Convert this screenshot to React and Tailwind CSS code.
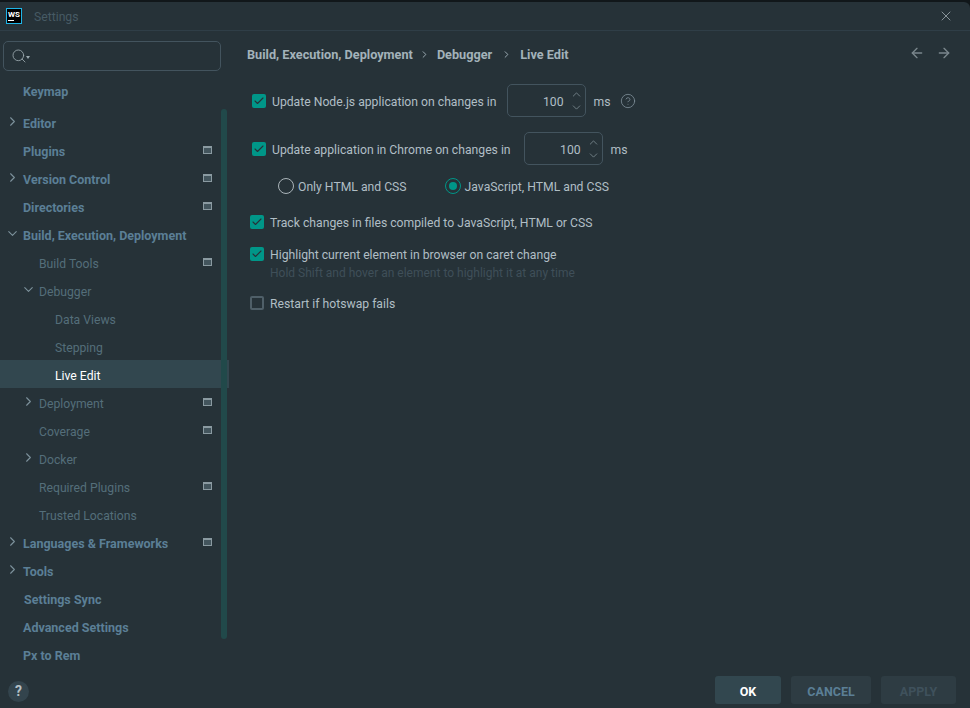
import React from "react";
import { ArrowLeft, ArrowRight, Check, ChevronDown, ChevronRight, ChevronUp, CircleHelp, Search, X } from "lucide-react";

const navItems = [
  { label: "Keymap", bold: true, indent: 23, after: 4 },
  { label: "Editor", bold: true, indent: 23, arrow: true },
  { label: "Plugins", bold: true, indent: 23, badge: true },
  { label: "Version Control", bold: true, indent: 23, arrow: true, badge: true },
  { label: "Directories", bold: true, indent: 23, badge: true },
  { label: "Build, Execution, Deployment", bold: true, indent: 23, arrow: "open" },
  { label: "Build Tools", indent: 39, badge: true },
  { label: "Debugger", indent: 39, arrow: "open" },
  { label: "Data Views", indent: 55 },
  { label: "Stepping", indent: 55 },
  { label: "Live Edit", indent: 55, active: true },
  { label: "Deployment", indent: 39, arrow: true, badge: true },
  { label: "Coverage", indent: 39, badge: true },
  { label: "Docker", indent: 39, arrow: true },
  { label: "Required Plugins", indent: 39, badge: true },
  { label: "Trusted Locations", indent: 39 },
  { label: "Languages & Frameworks", bold: true, indent: 23, arrow: true, badge: true },
  { label: "Tools", bold: true, indent: 23, arrow: true },
  { label: "Settings Sync", bold: true, indent: 24 },
  { label: "Advanced Settings", bold: true, indent: 23 },
  { label: "Px to Rem", bold: true, indent: 23 },
];

function NavRow({ item }) {
  return (
    <div
      className={`relative flex h-7 shrink-0 items-center pr-[17px] pt-1 ${item.active ? "bg-[#32474f] text-white" : item.bold ? "text-[12.5px] font-bold text-[#5b7f96]" : "text-[#546e7a]"} ${item.after ? "mb-1" : ""}`}
      style={{ paddingLeft: item.indent }}
    >
      {item.arrow && (
        <span className="absolute top-1.5" style={{ left: item.indent - 18 }}>
          {item.arrow === "open" ? (
            <ChevronDown size={15} strokeWidth={1.7} className="text-[#7d929c]" />
          ) : (
            <ChevronRight size={15} strokeWidth={1.7} className="text-[#7d929c]" />
          )}
        </span>
      )}
      <span className="flex-1 whitespace-nowrap">{item.label}</span>
      {item.badge && (
        <svg width="9" height="8" viewBox="0 0 9 8" className="mb-1">
          <path d="M0 0h9v8H0z" fill="#8a9aa1" />
          <path d="M1 2h7v5H1z" fill="#43555d" />
        </svg>
      )}
    </div>
  );
}

function CheckBox({ checked }) {
  return checked ? (
    <span className="flex h-3.5 w-3.5 shrink-0 items-center justify-center rounded-[2px] bg-[#009688]">
      <Check size={12} strokeWidth={2.2} className="text-[#263238]" />
    </span>
  ) : (
    <span className="h-3.5 w-3.5 shrink-0 rounded-[2px] border-2 border-[#4f5f68]" />
  );
}

function Label({ className = "ml-1.5", children }) {
  return <span className={`whitespace-nowrap pt-[3px] ${className}`}>{children}</span>;
}

function Spinner({ className }) {
  return (
    <div className={`flex h-[33px] w-[79px] items-center justify-end rounded-[5px] border border-[#43545e] pr-[2px] ${className}`}>
      <span className="mr-1.5 pt-[3px] text-[#b0bec5]">100</span>
      <span className="flex flex-col text-[#8c9ba3]">
        <ChevronUp size={13} strokeWidth={1.3} />
        <ChevronDown size={13} strokeWidth={1.3} />
      </span>
    </div>
  );
}

export default function App() {
  return (
    <div className="flex h-[708px] w-[970px] flex-col overflow-hidden bg-[#11171a] font-['Roboto',sans-serif] text-[12.2px] text-[#b0bec5]">
      <div className="mt-0.5 flex h-[29px] shrink-0 items-center rounded-tr-md border-b border-[#2f3e47] bg-[#263238] pl-1.5 pr-4">
        <div className="flex h-4 w-4 items-center justify-center border border-[#1fb6e8] bg-black text-[8px] font-bold leading-none text-white">
          <span className="flex flex-col">
            WS
            <span className="mt-px h-px w-[6px] bg-white" />
          </span>
        </div>
        <span className="ml-3 mt-0.5 flex-1 text-[#465a64]">Settings</span>
        <X size={16} strokeWidth={1.3} className="text-[#98a4a9]" />
      </div>
      <div className="flex min-h-0 flex-1 bg-[#263238]">
        <aside className="relative flex w-[229px] shrink-0 flex-col pt-[10px]">
          <div className="mb-[5px] ml-[3px] flex h-[30px] w-[218px] shrink-0 items-center rounded-[5px] border border-[#43545e] pl-[7px]">
            <Search size={16} strokeWidth={1.3} className="text-[#9aa8ae]" />
            <span className="-ml-px mt-0.5 h-0 w-0 border-x-[2.5px] border-t-[3px] border-x-transparent border-t-[#9aa8ae]" />
          </div>
          {navItems.map((item) => (
            <NavRow item={item} key={item.label} />
          ))}
          <div className="absolute left-[221px] top-[78px] h-[530px] w-[6px] rounded-full bg-[#21494a]" />
          <div className="mb-1.5 ml-2 mt-auto flex h-[21px] w-[21px] items-center justify-center rounded-full bg-[#33444d] text-[14px] font-bold text-[#b4bfc4]">
            ?
          </div>
        </aside>
        <main className="flex min-w-0 flex-1 flex-col">
          <header className="flex h-[47px] shrink-0 items-center pl-[18px] pr-[18px] text-[12.7px] font-bold text-[#a3b2ba]">
            <span>Build, Execution, Deployment</span>
            <ChevronRight size={11} strokeWidth={2} className="ml-1.5 mr-[7px]" />
            <span>Debugger</span>
            <ChevronRight size={11} strokeWidth={2} className="ml-[9px] mr-2" />
            <span>Live Edit</span>
            <span className="flex-1" />
            <ArrowLeft size={16} strokeWidth={2} className="mb-1 mr-[11px] text-[#7b878d]" />
            <ArrowRight size={16} strokeWidth={2} className="mb-1 text-[#7b878d]" />
          </header>
          <div className="flex flex-1 flex-col pl-[21px]">
            <div className="mt-1.5 flex h-[33px] items-center pl-[2px]">
              <CheckBox checked />
              <Label>Update Node.js application on changes in</Label>
              <Spinner className="ml-2.5" />
              <Label className="ml-2">ms</Label>
              <CircleHelp size={16} strokeWidth={1.2} className="ml-[9px] text-[#80909a]" />
            </div>
            <div className="mt-[15px] flex h-[33px] items-center pl-[2px]">
              <CheckBox checked />
              <Label>Update application in Chrome on changes in</Label>
              <Spinner className="ml-[13px]" />
              <Label className="ml-2">ms</Label>
            </div>
            <div className="mt-3 flex h-[18px] items-center pl-7">
              <span className="h-4 w-4 rounded-full border border-[#aab4b9]" />
              <Label className="ml-1">Only HTML and CSS</Label>
              <span className="ml-[38px] flex h-4 w-4 items-center justify-center rounded-full border border-[#009688]">
                <span className="h-2 w-2 rounded-full bg-[#009688]" />
              </span>
              <Label className="ml-1">JavaScript, HTML and CSS</Label>
            </div>
            <div className="mt-[18px] flex h-[18px] items-center">
              <CheckBox checked />
              <Label>Track changes in files compiled to JavaScript, HTML or CSS</Label>
            </div>
            <div className="mt-3.5 flex h-[18px] items-center">
              <CheckBox checked />
              <Label>Highlight current element in browser on caret change</Label>
            </div>
            <p className="ml-5 mt-0.5 text-xs text-[#3f4f59]">Hold Shift and hover an element to highlight it at any time</p>
            <div className="mt-[13px] flex h-[18px] items-center">
              <CheckBox />
              <Label>Restart if hotswap fails</Label>
            </div>
          </div>
          <footer className="flex justify-end gap-2.5 pb-1 pr-3.5 text-[12.5px] font-bold">
            <button className="h-7 w-[66px] rounded-[3px] bg-[#32474f] pt-1 text-white">OK</button>
            <button className="h-7 w-20 rounded-[3px] bg-[#2e3c43] pt-1 text-[#5b7f96]">CANCEL</button>
            <button className="h-7 w-[75px] rounded-[3px] bg-[#2e3c43] pt-1 text-[#3f515c]">APPLY</button>
          </footer>
        </main>
      </div>
    </div>
  );
}
